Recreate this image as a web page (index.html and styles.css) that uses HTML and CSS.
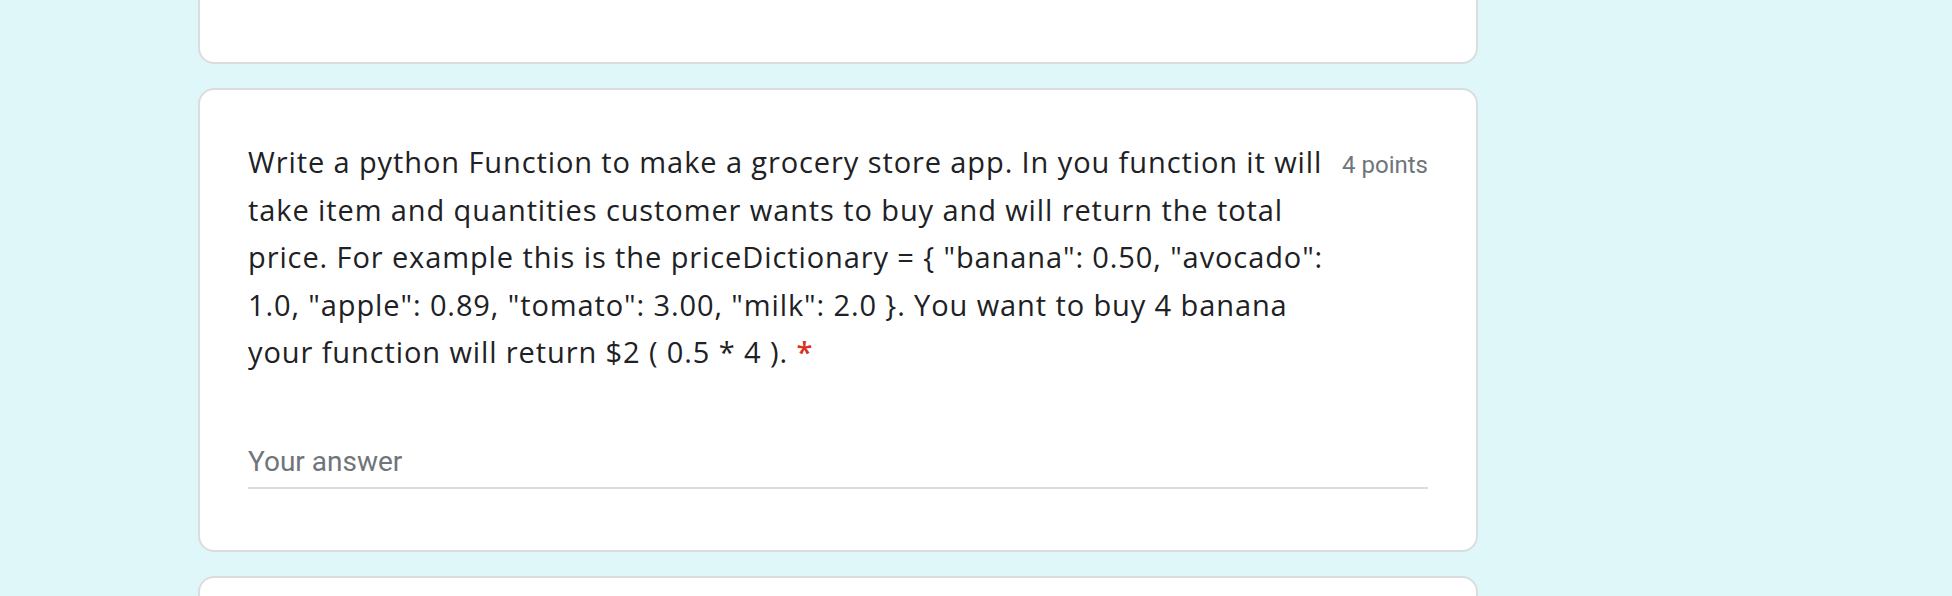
FILE: index.html
```html
<!DOCTYPE html>
<html lang="en">
<head>
    <meta charset="UTF-8">
    <title>Grocery store quiz</title>
    <link rel="stylesheet" href="styles.css">
</head>
<body>
    <div class="form-list">
        <div class="card card-prev"></div>

        <div class="card question">
            <div class="question-head">
                <div class="question-title">Write a python Function to make a grocery store app. In you function it will<br>take item and quantities customer wants to buy and will return the total<br>price. For example this is the priceDictionary = { "banana": 0.50, "avocado":<br>1.0, "apple": 0.89, "tomato": 3.00, "milk": 2.0 }. You want to buy 4 banana<br>your function will return $2 ( 0.5 * 4 ). <span class="required">*</span></div>
                <div class="points">4 points</div>
            </div>
            <div class="answer">Your answer</div>
        </div>

        <div class="card card-next"></div>
    </div>
</body>
</html>
```
FILE: styles.css
```css
body {
    margin: 0;
    background: #e0f7fa;
    overflow: hidden;
}

.form-list {
    display: flex;
    flex-direction: column;
    gap: 24px;
    padding-left: 198px;
}

.card {
    width: 1280px;
    box-sizing: border-box;
    background: white;
    border: 2px solid #dadce0;
    border-radius: 16px;
}

.card-prev {
    height: 104px;
    margin-top: -40px;
}

.card-next {
    height: 21px;
    border-bottom: none;
    border-radius: 16px 16px 0 0;
}

.question {
    padding: 48px 48px 61px;
}

.question-head {
    display: flex;
    align-items: baseline;
}

.question-title {
    flex: 1;
    min-width: 0;
    white-space: nowrap;
    font-family: 'Open Sans', sans-serif;
    font-size: 29px;
    letter-spacing: 0.9px;
    line-height: 47.5px;
    color: #202124;
}

.required {
    color: #d93025;
    font-weight: 600;
}

.points {
    margin-left: 16px;
    font-family: Roboto, sans-serif;
    font-size: 24px;
    color: #70757a;
}

.answer {
    margin-top: 69px;
    padding-bottom: 8px;
    border-bottom: 2px solid #dadce0;
    font-family: Roboto, sans-serif;
    font-size: 28px;
    line-height: 34px;
    color: #70757a;
}
```
